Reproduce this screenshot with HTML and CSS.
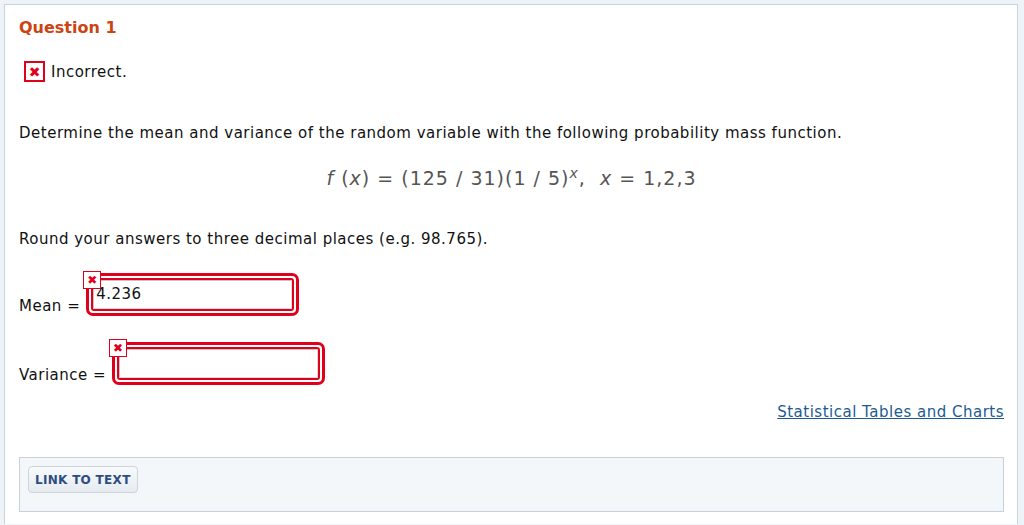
FILE: index.html
```html
<!DOCTYPE html>
<html lang="en">
<head>
    <meta charset="UTF-8">
    <title>Question 1</title>
    <link rel="stylesheet" href="styles.css">
</head>
<body>
    <div class="panel">
        <h2 class="q-title">Question 1</h2>

        <div class="status">
            <span class="x-box big">&#x2716;</span>
            <span>Incorrect.</span>
        </div>

        <p class="prompt">Determine the mean and variance of the random variable with the following probability mass function.</p>

        <div class="formula">
            <i>f</i> (<i>x</i>) = (125 / 31)(1 / 5)<sup><i>x</i></sup>,&nbsp; <i>x</i> = 1,2,3
        </div>

        <p class="prompt round">Round your answers to three decimal places (e.g. 98.765).</p>

        <div class="answer mean">
            <span class="label">Mean =</span>
            <div class="ring">
                <span class="x-box small">&#x2716;</span>
                <div class="ring-inner">
                    <input type="text" value="4.236">
                </div>
            </div>
        </div>

        <div class="answer variance">
            <span class="label">Variance =</span>
            <div class="ring">
                <span class="x-box small">&#x2716;</span>
                <div class="ring-inner">
                    <input type="text" value="">
                </div>
            </div>
        </div>

        <div class="links">
            <a href="#">Statistical Tables and Charts</a>
        </div>

        <div class="toolbox">
            <button type="button">LINK TO TEXT</button>
        </div>
    </div>
</body>
</html>
```

FILE: styles.css
```css
body {
    margin: 0;
    background-color: #eef3f8;
    font-family: "DejaVu Sans", Verdana, sans-serif;
    color: #111;
    font-size: 15px;
    letter-spacing: 0.5px;
}
.panel {
    margin: 4px 6px 0 4px;
    background: white;
    border: 1px solid #c9d3dd;
    border-bottom: none;
    padding: 12px 13px 14px 14px;
    height: 520px;
    box-sizing: border-box;
}
.q-title {
    margin: 0;
    font-size: 16px;
    line-height: 22px;
    color: #cc4411;
    font-weight: bold;
    letter-spacing: 0;
}
.status {
    display: flex;
    align-items: center;
    gap: 6px;
    margin: 22px 0 0 5px;
    line-height: 20px;
}
.x-box {
    display: inline-flex;
    align-items: center;
    justify-content: center;
    background: white;
    color: #e0001b;
    border: 2px solid #e0001b;
    box-sizing: border-box;
    font-weight: bold;
    letter-spacing: 0;
}
.x-box.big {
    width: 21px;
    height: 21px;
    font-size: 14px;
}
.x-box.small {
    width: 18px;
    height: 18px;
    font-size: 12px;
    border-width: 1px;
    position: absolute;
    left: -6px;
    top: -5px;
}
.prompt {
    margin: 41px 0 0 0;
    line-height: 20px;
}
.formula {
    text-align: center;
    color: #555;
    font-size: 19px;
    letter-spacing: 1px;
    margin-top: 19px;
    line-height: 22px;
}
.formula sup {
    font-size: 14px;
}
.prompt.round {
    margin-top: 40px;
}
.answer {
    display: flex;
    align-items: flex-end;
    gap: 6px;
}
.answer.mean {
    margin-top: 24px;
}
.answer.variance {
    margin-top: 26px;
}
.label {
    line-height: 18px;
    padding-bottom: 1px;
}
.ring {
    position: relative;
    border: 3px solid #e0001b;
    border-radius: 7px;
    padding: 2px;
}
.variance .x-box.small {
    top: -6px;
}
.ring-inner {
    border: 2px solid #e0001b;
    border-radius: 3px;
}
.ring-inner input {
    display: block;
    width: 199px;
    height: 29px;
    box-sizing: border-box;
    border: 1px solid #c4c4c4;
    border-right-color: #ddd;
    border-bottom-color: #ddd;
    padding: 0 0 2px 2px;
    font-family: "DejaVu Sans", Verdana, sans-serif;
    font-size: 15px;
    letter-spacing: 0.5px;
    color: #111;
}
.links {
    text-align: right;
    margin-top: 17px;
    line-height: 20px;
}
.links a {
    color: #1d5b92;
}
.toolbox {
    margin-top: 35px;
    background: #f4f7fa;
    border: 1px solid #c6d1dd;
    height: 55px;
    box-sizing: border-box;
    padding: 8px 8px;
}
.toolbox button {
    font-family: "DejaVu Sans", Verdana, sans-serif;
    font-weight: bold;
    font-size: 12px;
    letter-spacing: 0.3px;
    color: #2c4d80;
    background: linear-gradient(#f8fafc, #e6ebf0);
    border: 1px solid #ccd4dc;
    border-radius: 4px;
    padding: 5px 6px;
    height: 27px;
}
```
